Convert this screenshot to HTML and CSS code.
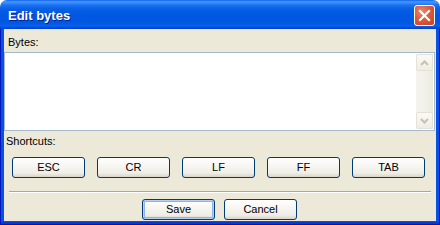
FILE: index.html
```html
<!DOCTYPE html>
<html>
<head>
<meta charset="utf-8">
<link rel="stylesheet" href="styles.css">
</head>
<body>
<div class="window">
  <div class="titlebar">
    <span class="title">Edit bytes</span>
    <div class="close">
      <svg width="13" height="13" viewBox="0 0 13 13"><path d="M2 2 L11 11 M11 2 L2 11" stroke="#fff" stroke-width="2.2" stroke-linecap="square"/></svg>
    </div>
  </div>
  <div class="frame">
    <div class="content">
      <div class="label bytes-label">Bytes:</div>
      <div class="textbox">
        <div class="text-area"></div>
        <div class="scrollbar">
          <div class="arrow">
            <svg width="9" height="6" viewBox="0 0 9 6"><path d="M1 5 L4.5 1.5 L8 5" fill="none" stroke="#C5C2B2" stroke-width="2"/></svg>
          </div>
          <div class="track"></div>
          <div class="arrow">
            <svg width="9" height="6" viewBox="0 0 9 6"><path d="M1 1 L4.5 4.5 L8 1" fill="none" stroke="#C5C2B2" stroke-width="2"/></svg>
          </div>
        </div>
      </div>
      <div class="label shortcuts-label">Shortcuts:</div>
      <div class="shortcuts">
        <div class="btn">ESC</div>
        <div class="btn">CR</div>
        <div class="btn">LF</div>
        <div class="btn">FF</div>
        <div class="btn">TAB</div>
      </div>
      <div class="separator"></div>
      <div class="actions">
        <div class="btn default">Save</div>
        <div class="btn">Cancel</div>
      </div>
    </div>
  </div>
</div>
</body>
</html>
```
FILE: styles.css
```css
html, body {
  margin: 0;
  padding: 0;
  background: #ffffff;
}
.window {
  width: 440px;
  height: 225px;
  display: flex;
  flex-direction: column;
  font-family: "Liberation Sans", Arial, sans-serif;
  font-size: 11px;
  color: #000;
}
.titlebar {
  height: 29px;
  flex: none;
  border-radius: 7px 7px 0 0;
  background: linear-gradient(to bottom, #0050E0 0px, #3C93FF 1px, #3A8CFA 3px, #1C72F0 5px, #075FE6 9px, #0058E2 15px, #0056E0 22px, #0561EC 26px, #0048D8 28px, #003BC8 29px);
  display: flex;
  align-items: center;
  justify-content: space-between;
  padding: 0 5px 0 8px;
  box-sizing: border-box;
}
.title {
  color: #fff;
  font-weight: bold;
  font-size: 13px;
  text-shadow: 1px 1px 0 #0A1F8E;
  margin-top: 2px;
}
.close {
  width: 21px;
  height: 21px;
  box-sizing: border-box;
  border: 1px solid #fff;
  border-radius: 3px;
  background: radial-gradient(circle at 35% 30%, #E88B70 0%, #DD5A3B 45%, #C8401F 100%);
  display: flex;
  align-items: center;
  justify-content: center;
  margin-top: 2px;
}
.close svg { display: block; }
.frame {
  flex: 1;
  background: #0A4FE3;
  padding: 0 4px 4px 4px;
  display: flex;
  box-shadow: inset 1px 0 0 #0019B8, inset -1px 0 0 #0019B8, inset 0 -1px 0 #001AA8, inset 0 -3px 0 #0838D2;
}
.content {
  flex: 1;
  background: #ECE9D8;
  display: flex;
  flex-direction: column;
}
.label {
  height: 13px;
  line-height: 13px;
}
.bytes-label {
  margin: 7px 0 0 4px;
}
.textbox {
  margin: 3px 1px 0 0;
  height: 79px;
  box-sizing: border-box;
  border: 1px solid #A5B9CE;
  background: #fff;
  display: flex;
  padding: 1px 1px 1px 0;
}
.text-area {
  flex: 1;
}
.scrollbar {
  width: 17px;
  display: flex;
  flex-direction: column;
  background: linear-gradient(to right, #F4F3EE, #F1F0E8 60%, #ECEBE2);
}
.arrow {
  height: 17px;
  box-sizing: border-box;
  border: 1px solid #E4E2D6;
  border-radius: 2px;
  background: linear-gradient(to bottom, #FAF9F5, #EEEDE5);
  display: flex;
  align-items: center;
  justify-content: center;
}
.arrow svg { display: block; }
.track { flex: 1; }
.shortcuts-label {
  margin: 4px 0 0 2px;
}
.shortcuts {
  display: flex;
  gap: 12px;
  margin: 9px 0 0 8px;
}
.btn {
  width: 73px;
  height: 21px;
  box-sizing: border-box;
  border: 1px solid #003C74;
  border-radius: 3px;
  background: linear-gradient(to bottom, #FFFFFF 0%, #F7F6F2 40%, #EFEDE6 80%, #D9D4C8 100%);
  display: flex;
  align-items: center;
  justify-content: center;
  line-height: 13px;
}
.btn.default {
  box-shadow: inset 0 0 0 1px #B8D0F4, inset 0 0 0 2px #8FB2E8;
}
.separator {
  margin: 13px 5px 0 5px;
  height: 1px;
  background: #ACA899;
  border-bottom: 1px solid #fff;
}
.actions {
  display: flex;
  justify-content: center;
  gap: 9px;
  margin-top: 6px;
  padding-right: 1px;
}
```
